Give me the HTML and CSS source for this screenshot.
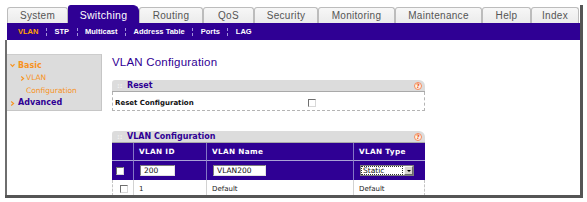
FILE: index.html
```html
<!DOCTYPE html>
<html>
<head>
<meta charset="utf-8">
<link rel="stylesheet" href="styles.css">
</head>
<body>
<div class="frame">
  <nav class="tabs">
    <div class="tab t-system">System</div>
    <div class="tab active t-switching">Switching</div>
    <div class="tab t-routing">Routing</div>
    <div class="tab t-qos">QoS</div>
    <div class="tab t-security">Security</div>
    <div class="tab t-monitoring">Monitoring</div>
    <div class="tab t-maintenance">Maintenance</div>
    <div class="tab t-help">Help</div>
    <div class="tab t-index">Index</div>
  </nav>
  <nav class="subnav">
    <span class="sub current">VLAN</span><span class="sep"></span>
    <span class="sub">STP</span><span class="sep"></span>
    <span class="sub">Multicast</span><span class="sep"></span>
    <span class="sub">Address Table</span><span class="sep"></span>
    <span class="sub">Ports</span><span class="sep"></span>
    <span class="sub">LAG</span>
  </nav>
  <div class="main">
    <aside class="sidebar">
      <div class="menu-row basic">
        <svg class="chev down" width="5" height="5" viewBox="0 0 5 5"><polyline points="0.5,1.2 2.5,3.4 4.5,1.2" fill="none" stroke="#f7931e" stroke-width="1.1"/></svg>
        <span class="menu-text">Basic</span>
      </div>
      <div class="menu-row vlan">
        <svg class="chev right" width="5" height="5" viewBox="0 0 5 5"><polyline points="1.2,0.5 3.6,2.5 1.2,4.5" fill="none" stroke="#f7931e" stroke-width="1.1"/></svg>
        <span class="menu-text">VLAN<br>Configuration</span>
      </div>
      <div class="menu-row adv">
        <svg class="chev right" width="5" height="5" viewBox="0 0 5 5"><polyline points="1.2,0.5 3.6,2.5 1.2,4.5" fill="none" stroke="#f7931e" stroke-width="1.1"/></svg>
        <span class="menu-text">Advanced</span>
      </div>
    </aside>
    <section class="content">
      <h1 class="title">VLAN Configuration</h1>
      <div class="panel">
        <div class="panel-head">
          <span class="grip">::</span>
          <span class="panel-title">Reset</span>
          <span class="help">?</span>
        </div>
        <div class="reset-body">
          <span class="label">Reset Configuration</span>
          <span class="cb"></span>
        </div>
      </div>
      <div class="panel vlan-panel">
        <div class="panel-head">
          <span class="grip">::</span>
          <span class="panel-title">VLAN Configuration</span>
          <span class="help">?</span>
        </div>
        <div class="grid">
          <div class="cell th"></div>
          <div class="cell th div">VLAN ID</div>
          <div class="cell th div">VLAN Name</div>
          <div class="cell th div">VLAN Type</div>

          <div class="cell edit"><span class="cb cb-edit"></span></div>
          <div class="cell edit div"><span class="field f-id">200</span></div>
          <div class="cell edit div"><span class="field f-name">VLAN200</span></div>
          <div class="cell edit div">
            <span class="select"><span class="sel-text">Static</span><span class="sel-btn"><span class="tri"></span></span></span>
          </div>

          <div class="cell row first"><span class="cb cb-row"></span></div>
          <div class="cell row div">1</div>
          <div class="cell row div">Default</div>
          <div class="cell row div last">Default</div>
        </div>
      </div>
    </section>
  </div>
</div>
</body>
</html>
```

FILE: styles.css
```css
html, body {
  margin: 0;
  padding: 0;
  background: #ffffff;
}

body {
  width: 587px;
  height: 202px;
  overflow: hidden;
}

.frame {
  margin: 5px 0 0 5px;
  width: 578px;
  height: 193px;
  box-sizing: border-box;
  border-right: 3px solid #555555;
  border-bottom: 3px solid #555555;
  display: flex;
  flex-direction: column;
  overflow: hidden;
}

/* ---------- top tabs ---------- */
.tabs {
  margin-left: 2px;
  height: 18px;
  display: flex;
  align-items: flex-end;
  flex: none;
}

.tab {
  box-sizing: border-box;
  height: 16px;
  border: 1px solid #bcbcbc;
  border-bottom: none;
  border-radius: 3px 3px 0 0;
  background: linear-gradient(#f7f7f7, #ebebeb);
  color: #555555;
  font-family: "Liberation Sans", Arial, sans-serif;
  font-size: 10px;
  letter-spacing: 0.3px;
  display: flex;
  align-items: center;
  justify-content: center;
}

.tab.active {
  height: 18px;
  background: #2f0094;
  border-color: #2f0094;
  color: #ffffff;
  font-size: 10.5px;
  border-radius: 3px 6px 0 0;
  padding-top: 1px;
}

.t-system { width: 61px; }
.t-switching { width: 71px; }
.t-routing { width: 64px; }
.t-qos { width: 51px; }
.t-security { width: 64px; }
.t-monitoring { width: 77px; }
.t-maintenance { width: 87px; }
.t-help { width: 49px; }
.t-index { width: 48px; }

/* ---------- sub navigation ---------- */
.subnav {
  margin-left: 2px;
  height: 17px;
  flex: none;
  background: #2f0094;
  display: flex;
  align-items: center;
  gap: 7.5px;
  padding-left: 11px;
  font-family: "Liberation Sans", Arial, sans-serif;
  font-size: 7.5px;
  font-weight: bold;
  color: #ffffff;
}

.sub.current {
  color: #ffa200;
}

.sep {
  width: 0;
  height: 8px;
  border-left: 1px dashed #a394dc;
}

/* ---------- main ---------- */
.main {
  flex: 1;
  min-height: 0;
  border-left: 2px solid #6e6e6e;
  display: flex;
  align-items: flex-start;
  gap: 10px;
  padding-top: 14px;
  overflow: hidden;
}

.sidebar {
  box-sizing: border-box;
  width: 95px;
  height: 57px;
  flex: none;
  background: #dcdcdc;
  border-top: 1px solid #cdcdcd;
  border-right: 1px solid #c6c6c6;
  border-bottom: 1px solid #c6c6c6;
  padding-top: 4.5px;
  font-family: "DejaVu Sans", Verdana, sans-serif;
  font-size: 7.5px;
  line-height: 12.5px;
  color: #f7931e;
}

.menu-row {
  display: flex;
  align-items: flex-start;
}

.chev {
  flex: none;
  margin-top: 3.5px;
}

.basic {
  padding-left: 3px;
}
.basic .menu-text {
  margin-left: 3px;
  font-weight: bold;
  font-size: 8px;
}

.vlan {
  padding-left: 13px;
}
.vlan .menu-text {
  margin-left: 1px;
}

.adv {
  padding-left: 3px;
}
.adv .menu-text {
  margin-left: 3px;
  font-weight: bold;
  font-size: 8px;
  color: #2f0094;
}

/* ---------- content ---------- */
.content {
  width: 313px;
  flex: none;
  font-family: "DejaVu Sans", Verdana, sans-serif;
}

.title {
  margin: 1px 0 0 0;
  height: 14px;
  line-height: 14px;
  font-family: "Liberation Sans", Arial, sans-serif;
  font-size: 11.5px;
  font-weight: normal;
  letter-spacing: 0.2px;
  color: #2f0094;
}

.panel {
  margin-top: 11px;
}

.vlan-panel {
  margin-top: 20px;
}

.panel-head {
  box-sizing: border-box;
  height: 12px;
  background: #dcdcdc;
  border-bottom: 1px solid #a9a9a9;
  border-radius: 3px 6px 0 0;
  display: flex;
  align-items: center;
  padding: 0 3px 0 5px;
}

.grip {
  color: #f2f2f2;
  font-size: 7px;
  font-weight: bold;
  width: 10px;
  line-height: 8px;
}

.panel-title {
  flex: 1;
  font-size: 8px;
  font-weight: bold;
  color: #2f0094;
  line-height: 11px;
}

.help {
  box-sizing: border-box;
  width: 8px;
  height: 8px;
  border-radius: 50%;
  border: 1px solid #f58a5c;
  background: #fff1e6;
  color: #e85a20;
  font-size: 6px;
  font-weight: bold;
  line-height: 6px;
  text-align: center;
}

.reset-body {
  box-sizing: border-box;
  height: 19px;
  border: 1px dashed #b4b4b4;
  border-top: none;
  display: flex;
  align-items: center;
  padding: 3px 0 0 2px;
}

.label {
  width: 193px;
  font-size: 7px;
  font-weight: bold;
  color: #111111;
}

.cb {
  box-sizing: border-box;
  display: block;
  width: 8px;
  height: 8px;
  background: #ffffff;
  border: 1px solid;
  border-color: #6f6f6f #d8d8d8 #d8d8d8 #6f6f6f;
}

/* ---------- table ---------- */
.grid {
  display: grid;
  grid-template-columns: 21px 73px 147px 72px;
}

.cell {
  box-sizing: border-box;
  display: flex;
  align-items: center;
  padding-left: 5px;
  font-size: 7px;
  color: #222222;
}

.th {
  height: 18px;
  background: #2f0094;
  border-bottom: 1px solid #aaa2d6;
  color: #ffffff;
  font-weight: bold;
  font-size: 7.3px;
  letter-spacing: 0.35px;
}

.edit {
  height: 19px;
  background: #2f0094;
  padding-left: 6px;
}

.th.div, .edit.div {
  border-left: 1px solid #8476c6;
}

.row {
  height: 16px;
  background: #ffffff;
  padding-left: 5px;
  padding-top: 1px;
}

.row.first {
  border-left: 1px dashed #c4c4c4;
}

.row.div {
  border-left: 1px solid #d2d2d2;
}

.row.last {
  border-right: 1px dashed #c4c4c4;
}

.cb-edit {
  margin-left: -2px;
}

.cb-row {
  margin-left: 2px;
}

.field {
  box-sizing: border-box;
  display: block;
  height: 11px;
  background: #ffffff;
  border: 1px solid;
  border-color: #7d7d7d #e2e2e2 #e2e2e2 #7d7d7d;
  font-size: 7.5px;
  line-height: 9px;
  padding-left: 3px;
  color: #111111;
}

.f-id { width: 35px; }
.f-name { width: 53px; }

.select {
  box-sizing: border-box;
  width: 54px;
  height: 11px;
  background: #ffffff;
  border: 1px solid #7d7d7d;
  display: flex;
  align-items: stretch;
}

.sel-text {
  flex: 1;
  box-sizing: border-box;
  border: 1px dotted #333333;
  font-size: 7.5px;
  line-height: 7px;
  padding-left: 1px;
  color: #111111;
  overflow: hidden;
}

.sel-btn {
  width: 9px;
  background: #d8d5cf;
  border: 1px solid;
  border-color: #f5f5f5 #6a6a6a #6a6a6a #f5f5f5;
  box-sizing: border-box;
  display: flex;
  align-items: center;
  justify-content: center;
  margin-left: 1px;
}

.tri {
  width: 0;
  height: 0;
  border-left: 2px solid transparent;
  border-right: 2px solid transparent;
  border-top: 2px solid #000000;
}
```
